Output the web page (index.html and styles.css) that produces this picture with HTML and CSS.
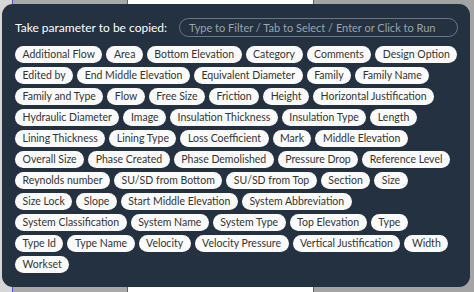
FILE: index.html
```html
<!DOCTYPE html>
<html>
	<head>
		<meta charset="UTF-8">
		<title>Copy Parameter</title>
		<link rel="stylesheet" href="styles.css">
	</head>
	<body>
		<div class="panel">
			<div class="head">
				<span class="title">Take parameter to be copied:</span>
				<input class="filter" type="text" placeholder="Type to Filter / Tab to Select / Enter or Click to Run">
			</div>
			<div class="chips">
				<ul>
					<li>Additional Flow</li>
					<li>Area</li>
					<li>Bottom Elevation</li>
					<li>Category</li>
					<li>Comments</li>
					<li>Design Option</li>
				</ul>
				<ul>
					<li>Edited by</li>
					<li>End Middle Elevation</li>
					<li>Equivalent Diameter</li>
					<li>Family</li>
					<li>Family Name</li>
				</ul>
				<ul>
					<li>Family and Type</li>
					<li>Flow</li>
					<li>Free Size</li>
					<li>Friction</li>
					<li>Height</li>
					<li>Horizontal Justification</li>
				</ul>
				<ul>
					<li>Hydraulic Diameter</li>
					<li>Image</li>
					<li>Insulation Thickness</li>
					<li>Insulation Type</li>
					<li>Length</li>
				</ul>
				<ul>
					<li>Lining Thickness</li>
					<li>Lining Type</li>
					<li>Loss Coefficient</li>
					<li>Mark</li>
					<li>Middle Elevation</li>
				</ul>
				<ul>
					<li>Overall Size</li>
					<li>Phase Created</li>
					<li>Phase Demolished</li>
					<li>Pressure Drop</li>
					<li>Reference Level</li>
				</ul>
				<ul>
					<li>Reynolds number</li>
					<li>SU/SD from Bottom</li>
					<li>SU/SD from Top</li>
					<li>Section</li>
					<li>Size</li>
				</ul>
				<ul>
					<li>Size Lock</li>
					<li>Slope</li>
					<li>Start Middle Elevation</li>
					<li>System Abbreviation</li>
				</ul>
				<ul>
					<li>System Classification</li>
					<li>System Name</li>
					<li>System Type</li>
					<li>Top Elevation</li>
					<li>Type</li>
				</ul>
				<ul>
					<li>Type Id</li>
					<li>Type Name</li>
					<li>Velocity</li>
					<li>Velocity Pressure</li>
					<li>Vertical Justification</li>
					<li>Width</li>
				</ul>
				<ul>
					<li>Workset</li>
				</ul>
			</div>
		</div>
	</body>
</html>
```

FILE: styles.css
```css
*{
	margin: 0;
	padding: 0;
	list-style: none;
	box-sizing: border-box;
}
html,body{
	height: 100%;
}
body{
	font-family: Lato, "Open Sans", sans-serif;
	/* window behind the popup */
	background: linear-gradient(to right,
		#d6d6d6 0, #d6d6d6 12px,
		#5b4fd0 12px, #5b4fd0 13px,
		#a9a9a9 13px, #a9a9a9 127px,
		#5b4fd0 127px, #5b4fd0 128px,
		#ffffff 128px, #ffffff 313px,
		#5b4fd0 313px, #5b4fd0 314px,
		#a4a4a4 314px);
	padding: 4px 4px 5px 2px;
}
.panel{
	height: 100%;
	background-color: #243140;
	border-radius: 11px;
	padding: 13px 12px 0 13px;
}
.head{
	display: flex;
	align-items: center;
	gap: 12px;
	height: 20px;
}
.title{
	color: #fff;
	font-size: 12px;
	white-space: nowrap;
}
.filter{
	flex: 1;
	height: 19px;
	border: 1px solid #6a7684;
	border-radius: 10px;
	background: transparent;
	color: #fff;
	font-family: inherit;
	font-size: 11px;
	padding: 0 9px;
	outline: none;
}
.filter::placeholder{
	color: #9ba4ad;
}
.chips{
	display: flex;
	flex-direction: column;
	gap: 4px;
	margin-top: 9px;
}
.chips ul{
	display: flex;
	gap: 4px;
}
.chips li{
	height: 17px;
	line-height: 17px;
	padding: 0 7.5px;
	border-radius: 9px;
	background-color: #fbfbfb;
	color: #333;
	font-size: 10.5px;
	white-space: nowrap;
}
```
